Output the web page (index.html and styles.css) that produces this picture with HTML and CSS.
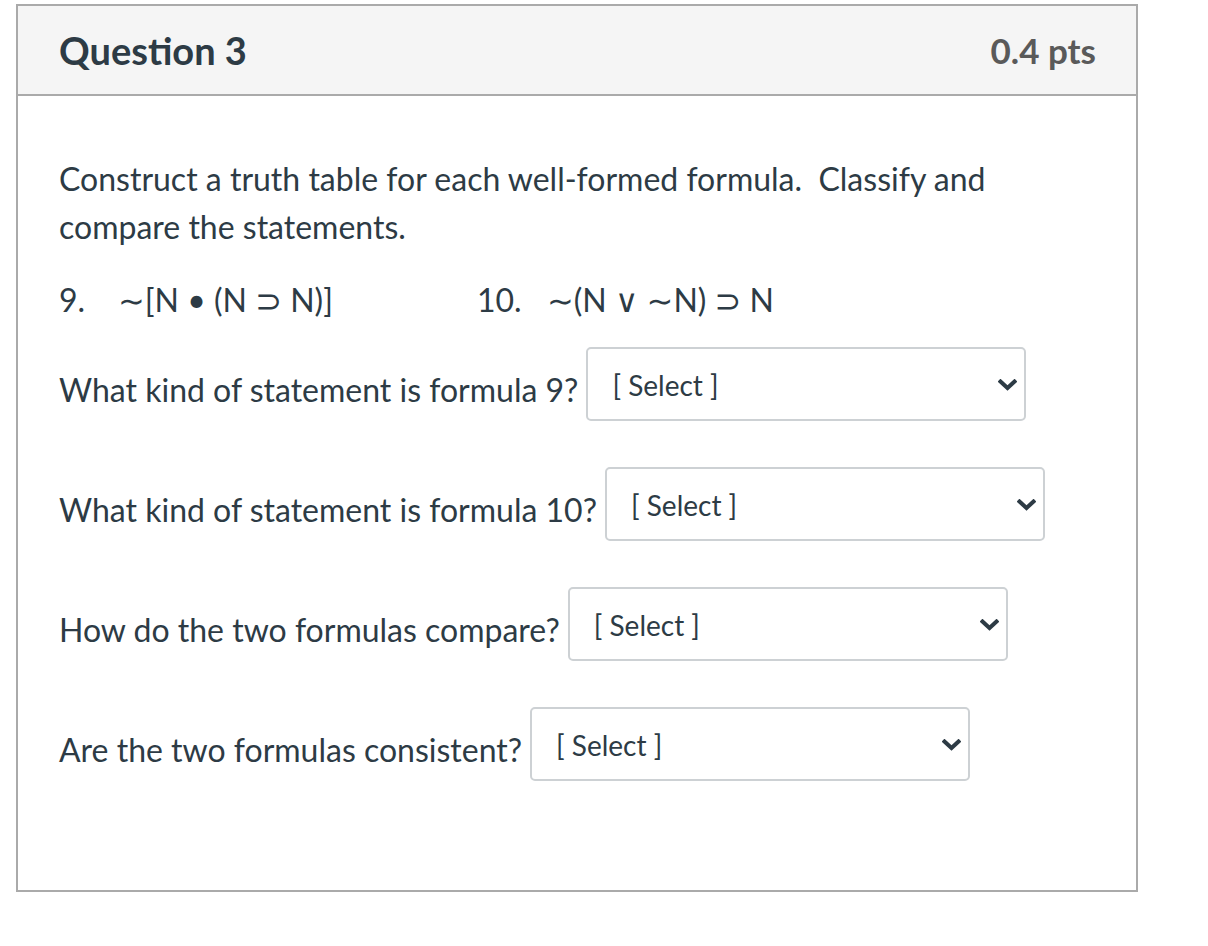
FILE: index.html
```html
<!DOCTYPE html>
<html lang="en">
<head>
<meta charset="utf-8">
<title>Question 3</title>
<link rel="stylesheet" href="styles.css">
</head>
<body>
<div class="question">
  <div class="q-header">
    <h2 class="q-title">Question 3</h2>
    <div class="q-points">0.4 pts</div>
  </div>
  <div class="q-body">
    <p class="prompt">Construct a truth table for each well-formed formula.&nbsp; Classify and<br>compare the statements.</p>
    <div class="formulas">
      <div class="formula f9"><span class="num n9">9.</span><span class="expr">∼[N • (N <span class="sym">⊃</span> N)]</span></div>
      <div class="formula f10"><span class="num n10">10.</span><span class="expr">∼(N <span class="sym">∨</span> ∼N) <span class="sym">⊃</span> N</span></div>
    </div>
    <div class="row first">
      <span class="label">What kind of statement is formula 9?</span>
      <div class="select"><span class="sel-text">[ Select ]</span><svg class="chev" width="19" height="12" viewBox="0 0 19 12"><path d="M2.5 2.5 L9.5 9 L16.5 2.5" fill="none" stroke="#2d3b45" stroke-width="4" stroke-linecap="square"/></svg></div>
    </div>
    <div class="row">
      <span class="label">What kind of statement is formula 10?</span>
      <div class="select"><span class="sel-text">[ Select ]</span><svg class="chev" width="19" height="12" viewBox="0 0 19 12"><path d="M2.5 2.5 L9.5 9 L16.5 2.5" fill="none" stroke="#2d3b45" stroke-width="4" stroke-linecap="square"/></svg></div>
    </div>
    <div class="row">
      <span class="label">How do the two formulas compare?</span>
      <div class="select"><span class="sel-text">[ Select ]</span><svg class="chev" width="19" height="12" viewBox="0 0 19 12"><path d="M2.5 2.5 L9.5 9 L16.5 2.5" fill="none" stroke="#2d3b45" stroke-width="4" stroke-linecap="square"/></svg></div>
    </div>
    <div class="row">
      <span class="label">Are the two formulas consistent?</span>
      <div class="select"><span class="sel-text">[ Select ]</span><svg class="chev" width="19" height="12" viewBox="0 0 19 12"><path d="M2.5 2.5 L9.5 9 L16.5 2.5" fill="none" stroke="#2d3b45" stroke-width="4" stroke-linecap="square"/></svg></div>
    </div>
  </div>
</div>
</body>
</html>
```

FILE: styles.css
```css
html, body {
  margin: 0;
  padding: 0;
  background: #ffffff;
}

body {
  font-family: Lato, "Open Sans", "DejaVu Sans", sans-serif;
  color: #2d3b45;
}

.question {
  margin: 4px 0 0 16px;
  width: 1122px;
  box-sizing: border-box;
  border: 2px solid #aaaaaa;
  background: #ffffff;
}

.q-header {
  height: 88px;
  box-sizing: content-box;
  background: #f5f5f5;
  border-bottom: 2px solid #aaaaaa;
  display: flex;
  align-items: center;
  justify-content: space-between;
  padding: 0 40px 0 41px;
}

.q-title {
  margin: 0;
  font-size: 38px;
  font-weight: 700;
  color: #2d3b45;
  line-height: 1;
}

.q-points {
  font-size: 35px;
  font-weight: 700;
  color: #5a5a5a;
  line-height: 1;
}

.q-body {
  padding: 59px 40px 109px 41px;
  font-size: 32px;
}

.prompt {
  margin: 0;
  line-height: 48px;
}

.formulas {
  margin-top: 25px;
  display: flex;
  height: 48px;
  line-height: 48px;
}

.formula {
  display: flex;
}

.f9 {
  width: 418px;
}

.n9 {
  width: 59px;
}

.n10 {
  width: 70px;
}

.sym {
  font-family: "DejaVu Sans", sans-serif;
  font-size: 32px;
  line-height: 1;
}

.row {
  margin-top: 46px;
  display: flex;
  align-items: center;
  height: 74px;
}

.row.first {
  margin-top: 23px;
}

.label {
  margin-right: 8px;
  padding-top: 10px;
}

.select {
  width: 440px;
  height: 74px;
  box-sizing: border-box;
  border: 2px solid #cdd1d4;
  border-radius: 5px;
  display: flex;
  align-items: center;
  justify-content: space-between;
  padding: 0 7px 0 24px;
}

.sel-text {
  font-size: 28px;
  padding-top: 2px;
  color: #2d3b45;
}

.chev {
  display: block;
  margin-top: 2px;
}
```
